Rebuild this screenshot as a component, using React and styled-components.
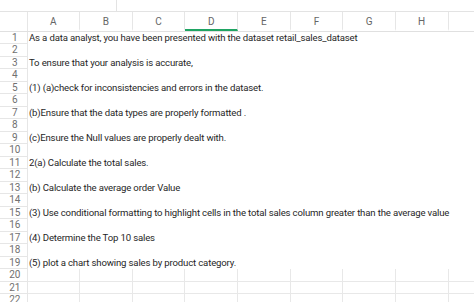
import React from "react";
import styled, { createGlobalStyle } from "styled-components";

const Global = createGlobalStyle`
  html, body { margin: 0; padding: 0; background: #fff; }
  body { font-family: Roboto, "Noto Sans", sans-serif; overflow: hidden; }
  * { box-sizing: border-box; }
`;

const COL_W = 52.625;
const NUM_W = 27.5;
const ROW_H = 12.5;
const cols = ["A", "B", "C", "D", "E", "F", "G", "H", ""];

const Sheet = styled.div`
  width: 474px;
  height: 302px;
  overflow: hidden;
  display: flex;
  flex-direction: column;
`;

const FormulaBar = styled.div`
  height: 12px;
  flex: none;
  display: flex;
  border-bottom: 1px solid #e3e3e3;
`;

const NameBox = styled.div`
  width: 117px;
  border-right: 1px solid #e3e3e3;
`;

const HeaderRow = styled.div`
  height: 19.5px;
  flex: none;
  display: flex;
  border-bottom: 1px solid #e0e0e0;
`;

const Corner = styled.div`
  width: ${NUM_W}px;
  flex: none;
  border-right: 1px solid #e6e6e6;
`;

const ColHead = styled.div`
  width: ${COL_W}px;
  flex: none;
  display: flex;
  align-items: center;
  justify-content: center;
  font-size: 10px;
  color: #666;
  border-right: 1px solid #e6e6e6;
  border-bottom: 2px solid ${(p) => (p.$active ? "#1fa463" : "transparent")};
  padding-top: 2px;
`;

const Row = styled.div`
  height: ${ROW_H}px;
  flex: none;
  display: flex;
`;

const RowNum = styled.div`
  width: ${NUM_W}px;
  flex: none;
  display: flex;
  align-items: center;
  justify-content: center;
  padding-left: 3px;
  font-size: 10px;
  color: #707070;
  border-right: 1px solid #e6e6e6;
  border-bottom: 1px solid #e6e6e6;
`;

const Cells = styled.div`
  flex: 1;
  position: relative;
  display: flex;
  min-width: 0;
`;

const Cell = styled.div`
  width: ${COL_W}px;
  flex: none;
  border-right: 1px solid ${(p) => (p.$grid ? "#e8e8e8" : "transparent")};
  border-bottom: 1px solid ${(p) => (p.$grid ? "#e8e8e8" : "transparent")};
`;

const CellText = styled.span`
  position: absolute;
  left: 1.5px;
  top: 0;
  height: 100%;
  display: flex;
  align-items: center;
  white-space: nowrap;
  font-size: 9.6px;
  color: #1f1f1f;
  letter-spacing: -0.16px;
`;

const texts = {
  1: "As a data analyst, you have been presented with the dataset retail_sales_dataset",
  3: "To ensure that your analysis is accurate,",
  5: "(1) (a)check for inconsistencies and errors in the dataset.",
  7: "(b)Ensure that the data types are properly formatted .",
  9: "(c)Ensure the Null values are properly dealt with.",
  11: "2(a) Calculate the total sales.",
  13: "(b) Calculate the average order Value",
  15: "(3) Use conditional formatting to highlight cells in the total sales column greater than the average value",
  17: "(4) Determine the Top 10 sales",
  19: "(5) plot a chart showing sales by product category.",
};

export default function App() {
  const rows = Array.from({ length: 22 }, (_, i) => i + 1);
  return (
    <Sheet>
      <Global />
      <FormulaBar>
        <NameBox />
      </FormulaBar>
      <HeaderRow>
        <Corner />
        {cols.map((c, i) => (
          <ColHead key={i} $active={c === "D"}>
            {c}
          </ColHead>
        ))}
      </HeaderRow>
      {rows.map((r) => (
        <Row key={r}>
          <RowNum>{r}</RowNum>
          <Cells>
            {cols.map((c, i) => (
              <Cell key={i} $grid={r >= 20} />
            ))}
            {texts[r] && <CellText>{texts[r]}</CellText>}
          </Cells>
        </Row>
      ))}
    </Sheet>
  );
}
